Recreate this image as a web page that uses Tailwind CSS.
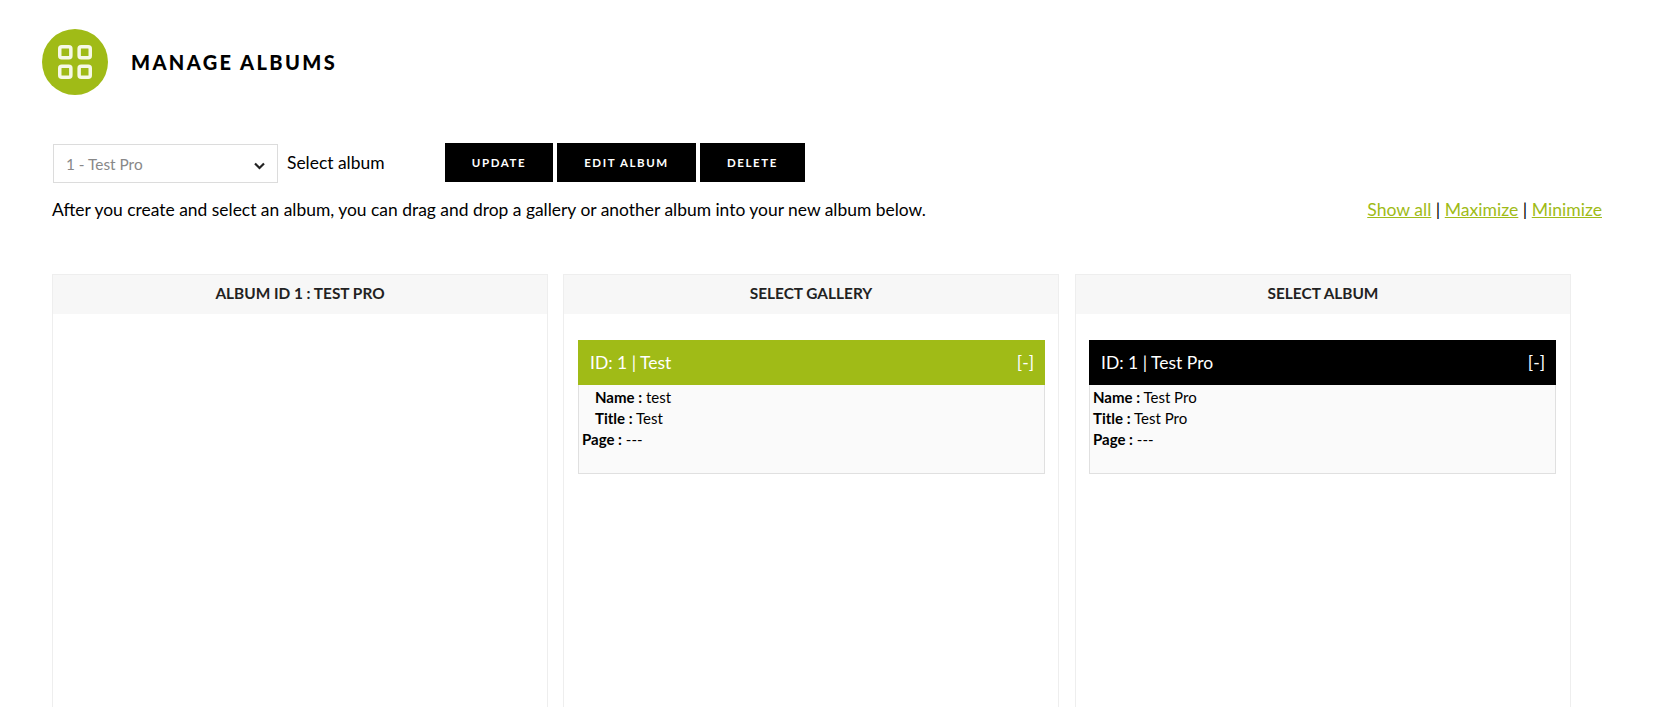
<!DOCTYPE html>
<html lang="en">

<head>
    <meta charset="UTF-8" />
    <meta name="viewport" content="width=device-width, initial-scale=1.0" />
    <title>Manage Albums</title>
    <script src="https://cdn.jsdelivr.net/npm/@tailwindcss/browser@4"></script>
</head>

<body class="bg-white text-black font-['Lato',sans-serif] text-[17.43px] h-[707px] overflow-hidden">
    <!-- Title -->
    <div class="flex items-center pl-[42px] pt-[29px] pb-[48px]">
        <div class="w-[66px] h-[66px] rounded-full bg-[#a0bb17] flex items-center justify-center">
            <svg width="34" height="34" viewBox="0 0 34 34" fill="none" stroke="#f6f8e6" stroke-width="3.5">
                <rect x="1.75" y="1.75" width="11.1" height="11.1" rx="2" />
                <rect x="21.15" y="1.75" width="11.1" height="11.1" rx="2" />
                <rect x="1.75" y="21.15" width="11.1" height="11.1" rx="2" />
                <rect x="21.15" y="21.15" width="11.1" height="11.1" rx="2" />
            </svg>
        </div>
        <h1 class="ml-[23px] text-[20px] leading-[24px] font-black tracking-[2.4px] text-black">MANAGE ALBUMS</h1>
    </div>

    <!-- Album select and buttons -->
    <div class="flex items-center pl-[53px] h-[40px]">
        <div class="relative w-[225px] h-[39px] mt-px border border-[#dcdcdc] text-[15.4px] text-[#888] flex items-center pl-[12px] pt-[3px]">
            1 - Test Pro
            <svg class="absolute right-[12px] top-[17px]" width="11" height="8" viewBox="0 0 11 8" fill="none" stroke="#222" stroke-width="2.2"><path d="M1 1.5l4.5 4.5 4.5-4.5" /></svg>
        </div>
        <span class="ml-[9px] w-[158px] pt-px">Select album</span>
        <div class="flex gap-[4px] -mt-px">
            <button class="w-[108px] h-[39px] bg-black text-white text-[11.5px] font-bold tracking-[1.6px]">UPDATE</button>
            <button class="w-[139px] h-[39px] bg-black text-white text-[11.5px] font-bold tracking-[1.6px]">EDIT ALBUM</button>
            <button class="w-[105px] h-[39px] bg-black text-white text-[11.5px] font-bold tracking-[1.6px]">DELETE</button>
        </div>
    </div>

    <div class="flex justify-between pl-[52px] pr-[56px] mt-[15px] h-[24px] leading-[24px]">
        <p>After you create and select an album, you can drag and drop a gallery or another album into your new album below.</p>
        <p class="text-[17.6px]"><a href="#" class="text-[#a0bb17] underline">Show all</a> | <a href="#" class="text-[#a0bb17] underline">Maximize</a> | <a href="#" class="text-[#a0bb17] underline">Minimize</a></p>
    </div>

    <!-- Panels -->
    <div class="flex gap-[15px] pl-[52px] mt-[52px]">
        <div class="w-[496px] h-[500px] border border-[#eeeeee]">
            <div class="h-[39px] bg-[#f7f7f7] text-center text-[15.4px] font-bold leading-[36px] text-[#222]">ALBUM ID 1 : TEST PRO</div>
        </div>

        <div class="w-[496px] h-[500px] border border-[#eeeeee]">
            <div class="h-[39px] bg-[#f7f7f7] text-center text-[15.4px] font-bold leading-[36px] text-[#222]">SELECT GALLERY</div>
            <div class="ml-[14px] mr-[13px] mt-[26px] border border-[#e0e0e0] border-t-0 bg-[#fafafa] h-[134px] text-[15px] leading-[21px]">
                <div class="-mx-px h-[45px] bg-[#a0bb17] text-white text-[17.5px] flex items-center justify-between pl-[12px] pr-[11px]">
                    <span>ID: 1 | Test</span><span>[-]</span>
                </div>
                <div class="pt-[2px]">
                    <div class="pl-[16px]"><b>Name :</b> test</div>
                    <div class="pl-[16px]"><b>Title :</b> Test</div>
                    <div class="pl-[3px]"><b>Page :</b> ---</div>
                </div>
            </div>
        </div>

        <div class="ml-px w-[496px] h-[500px] border border-[#eeeeee]">
            <div class="h-[39px] bg-[#f7f7f7] text-center text-[15.4px] font-bold leading-[36px] text-[#222]">SELECT ALBUM</div>
            <div class="ml-[13px] mr-[14px] mt-[26px] border border-[#e0e0e0] border-t-0 bg-[#fafafa] h-[134px] text-[15px] leading-[21px]">
                <div class="-mx-px h-[45px] bg-black text-white text-[17.5px] flex items-center justify-between pl-[12px] pr-[11px]">
                    <span>ID: 1 | Test Pro</span><span>[-]</span>
                </div>
                <div class="pt-[2px] pl-[3px]">
                    <div><b>Name :</b> Test Pro</div>
                    <div><b>Title :</b> Test Pro</div>
                    <div><b>Page :</b> ---</div>
                </div>
            </div>
        </div>
    </div>
</body>

</html>
